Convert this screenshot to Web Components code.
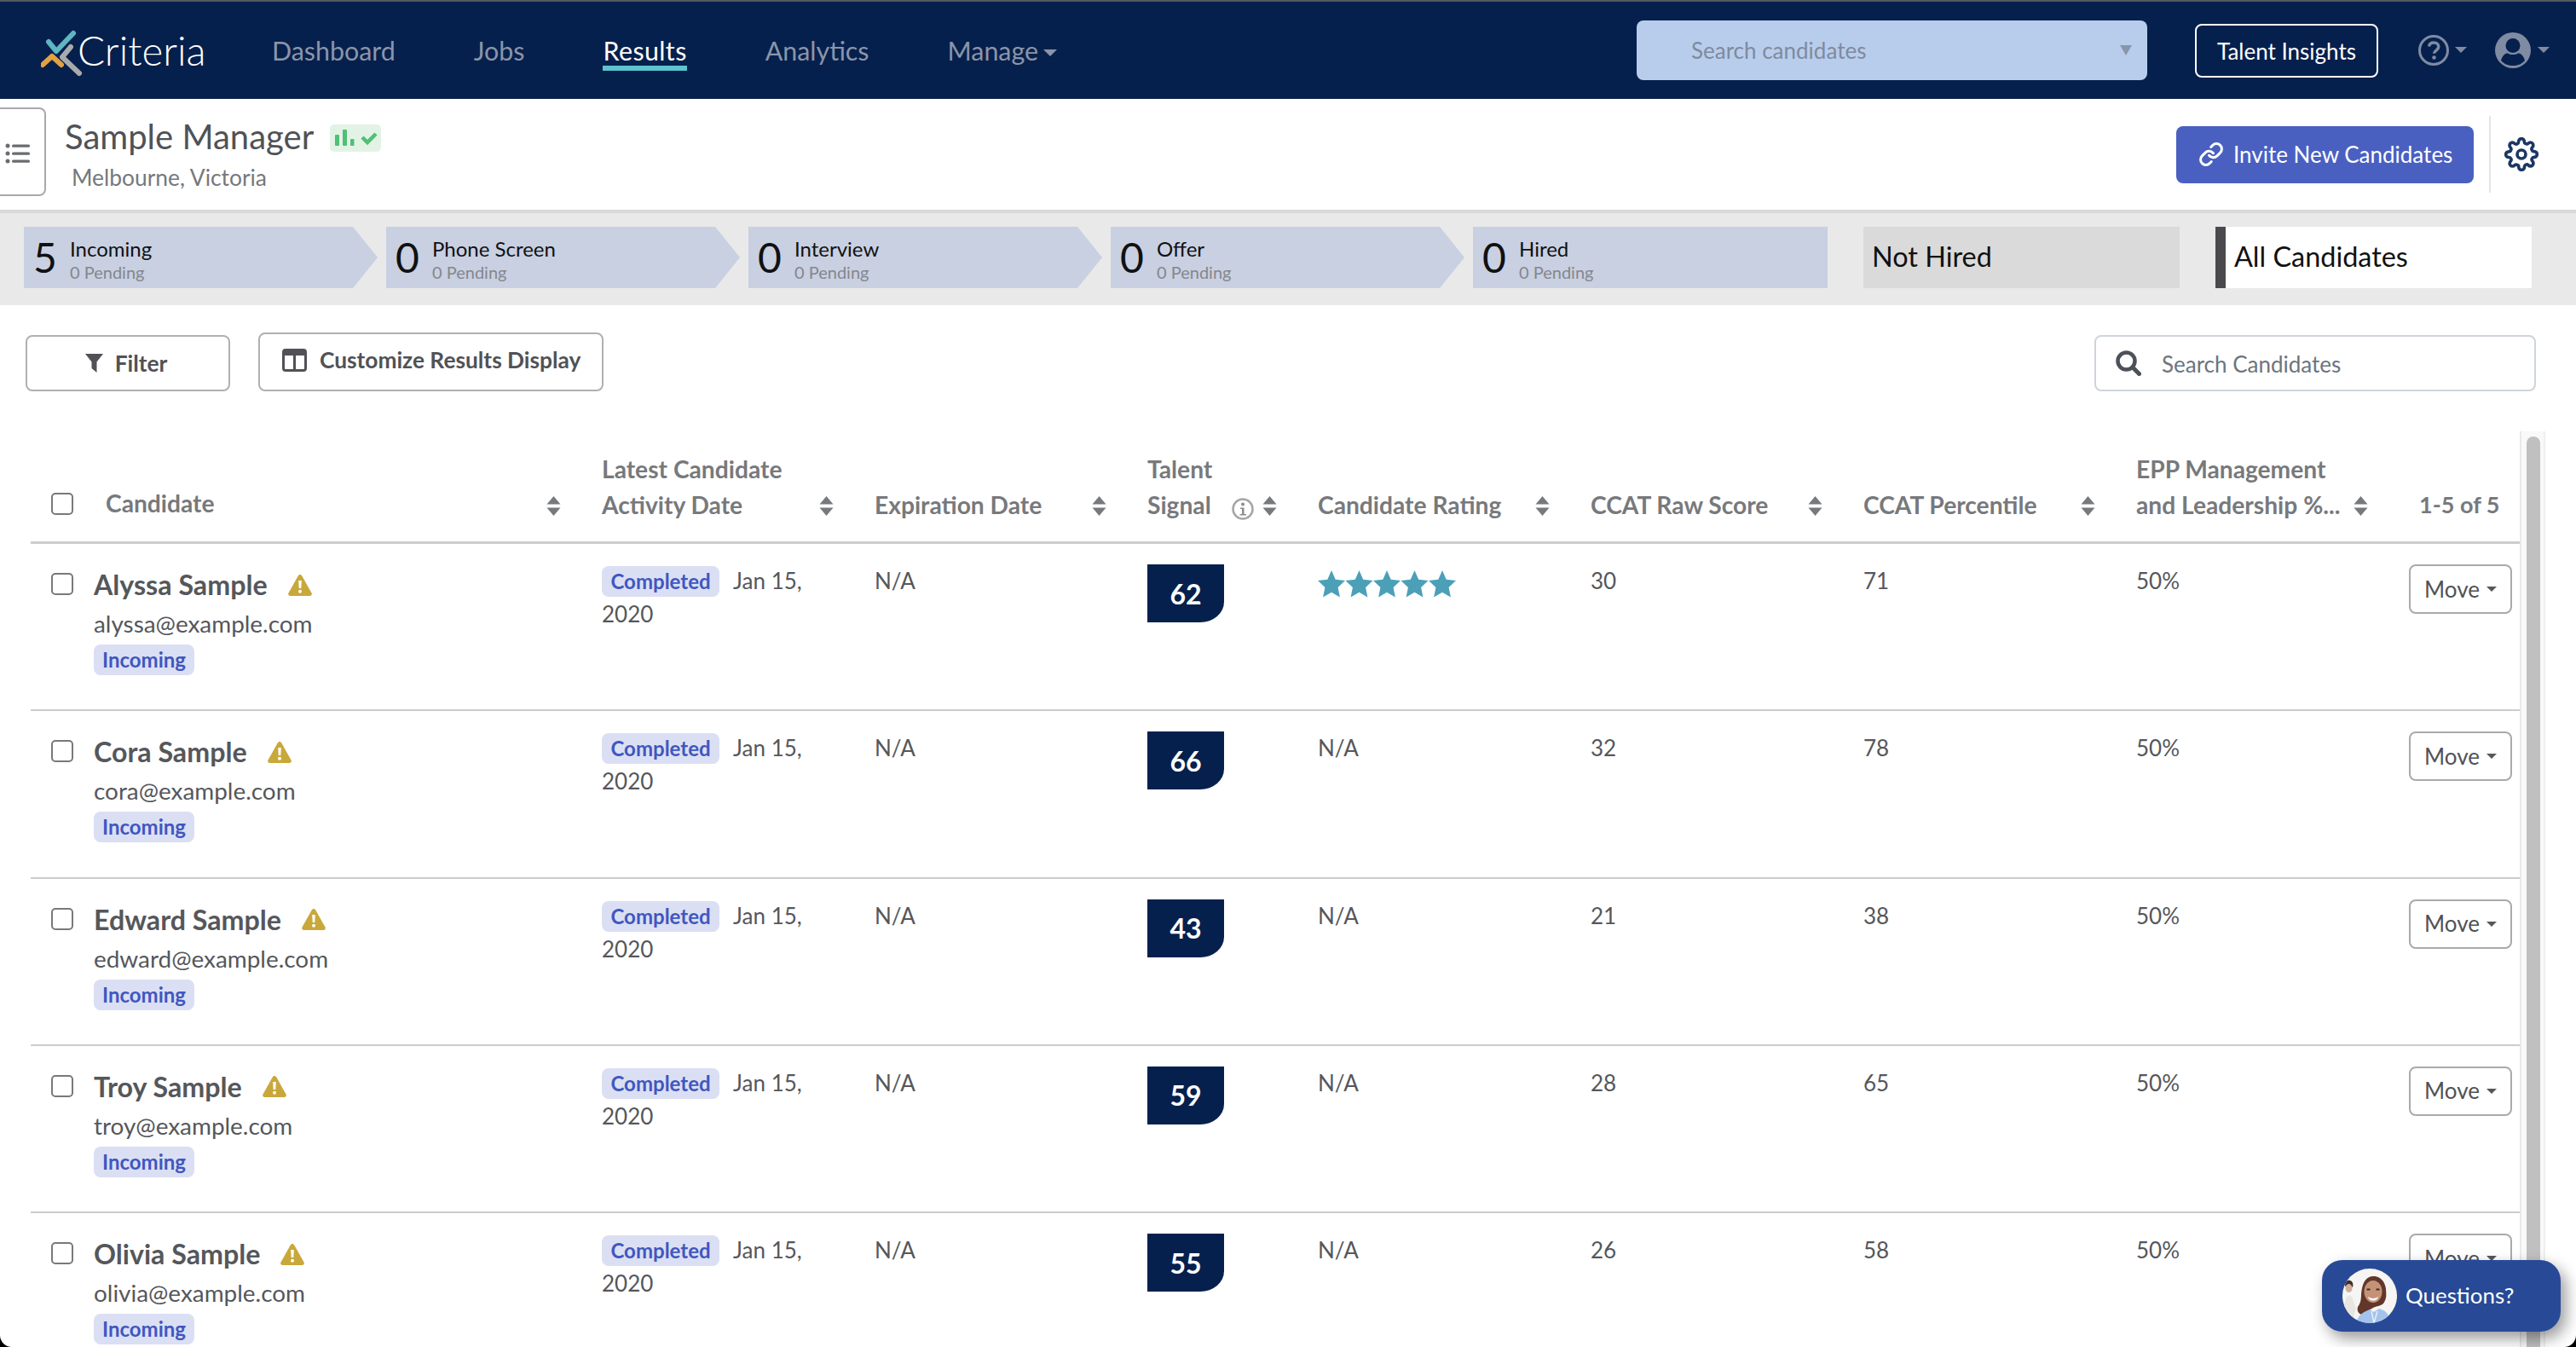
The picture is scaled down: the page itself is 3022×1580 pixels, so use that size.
<!DOCTYPE html>
<html lang="en"><head><meta charset="utf-8"><title>Criteria Results</title>
<style>
html,body{margin:0;padding:0;height:100%;overflow:hidden;background:#fff;font-family:Lato,"Liberation Sans",sans-serif;color:#55575b}
cr-app{height:1580px}
</style></head>
<body>
<cr-app>
  <cr-nav>
    <cr-link>Dashboard</cr-link><cr-link>Jobs</cr-link><cr-link active>Results</cr-link><cr-link>Analytics</cr-link><cr-link caret>Manage</cr-link>
  </cr-nav>
  <cr-subheader title-text="Sample Manager" sub="Melbourne, Victoria"></cr-subheader>
  <cr-pipeline>
    <cr-stage n="5" pending="0 Pending">Incoming</cr-stage>
    <cr-stage n="0" pending="0 Pending">Phone Screen</cr-stage>
    <cr-stage n="0" pending="0 Pending">Interview</cr-stage>
    <cr-stage n="0" pending="0 Pending">Offer</cr-stage>
    <cr-stage n="0" pending="0 Pending" last>Hired</cr-stage>
    <cr-bucket>Not Hired</cr-bucket>
    <cr-bucket selected>All Candidates</cr-bucket>
  </cr-pipeline>
  <cr-toolbar></cr-toolbar>
  <cr-table>
    <cr-row name="Alyssa Sample" email="alyssa@example.com" signal="62" rating="5" raw="30" pct="71"></cr-row>
    <cr-row name="Cora Sample" email="cora@example.com" signal="66" raw="32" pct="78"></cr-row>
    <cr-row name="Edward Sample" email="edward@example.com" signal="43" raw="21" pct="38"></cr-row>
    <cr-row name="Troy Sample" email="troy@example.com" signal="59" raw="28" pct="65"></cr-row>
    <cr-row name="Olivia Sample" email="olivia@example.com" signal="55" raw="26" pct="58"></cr-row>
  </cr-table>
  <cr-chat>Questions?</cr-chat>
  <cr-corners></cr-corners>
</cr-app>
<script>
const def=(tag,html,extra)=>{
  class C extends HTMLElement{
    constructor(){super();this.attachShadow({mode:'open'}).innerHTML=typeof html==='function'?html(this):html;}
    connectedCallback(){
      if(typeof html==='function'){this.shadowRoot.innerHTML=html(this);}
      if(extra)extra(this);
    }
  }
  customElements.define(tag,C);
};
const SORT=`<svg class="sort" width="17" height="23" viewBox="0 0 17 23"><path d="M8.5 0 16.5 9.5H.5zM8.5 23 .5 13.5h16z" fill="#77797c"/></svg>`;
const CHECKBOX=`<span style="display:block;box-sizing:border-box;width:26px;height:26px;border:2px solid #77797c;border-radius:5px;background:#fff;flex:none"></span>`;

def('cr-app',`<style>:host{display:block;position:relative;overflow:hidden}</style><slot></slot>`);

def('cr-nav',`<style>
:host{display:flex;align-items:center;box-sizing:border-box;height:116px;background:#06204d;border-top:2px solid #55585f;padding:0 31px 0 48px}
.logo{display:flex;align-items:center;width:192px;margin-right:79px;position:relative;height:70px}
.logo svg{position:absolute;left:0;top:0}
.logo span{margin-left:43px;font-size:47.5px;font-weight:300;color:#fff;line-height:70px;white-space:nowrap}
.links{display:flex;gap:92px;align-items:center}
.search{margin-left:auto;box-sizing:border-box;width:599px;height:70px;border-radius:8px;background:#b8cdec;display:flex;align-items:center;justify-content:space-between;padding:0 18px 0 64px;font-size:26px;color:#7f8a9e}
.tri{width:0;height:0;border:7px solid transparent;border-top:12px solid #8b95a8;border-bottom:0}
.ti{margin-left:56px;box-sizing:border-box;width:215px;height:63px;border:2px solid #fff;border-radius:8px;color:#fff;font-size:26px;display:flex;align-items:center;justify-content:center;margin-top:1px}
.ic{display:flex;align-items:center;gap:7px}
.ic i{display:block;width:0;height:0;border:7px solid transparent;border-top:7px solid #7f8ba3;border-bottom:0}
.help{margin-left:47px;margin-top:-1px}.user{margin-left:33px;gap:8px;margin-top:-1px}
</style>
<div class="logo"><svg width="70" height="70" viewBox="0 0 70 70" fill="none" stroke-linecap="round" stroke-linejoin="round" stroke-width="6">
<path d="M9 25 18 36 38 15" stroke="#5fb6c1"/><path d="M2 52 13 42 24 52" stroke="#e2a243"/><path d="M35 31 25 43 45 62" stroke="#a9abab"/></svg><span>Criteria</span></div>
<div class="links"><slot></slot></div>
<div class="search"><span>Search candidates</span><span class="tri"></span></div>
<div class="ti">Talent Insights</div>
<div class="ic help"><svg width="36" height="36" viewBox="0 0 36 36" fill="none"><circle cx="18" cy="18" r="16.5" stroke="#7f8ba3" stroke-width="3"/><path d="M12.5 13.5C13 10.5 15.5 9 18.2 9c3.2 0 5.6 2 5.6 4.8 0 4.2-5.3 4.2-5.3 8" stroke="#7f8ba3" stroke-width="3.4"/><circle cx="18.5" cy="26.5" r="2.3" fill="#7f8ba3"/></svg><i></i></div>
<div class="ic user"><svg width="42" height="42" viewBox="0 0 42 42"><circle cx="21" cy="21" r="21" fill="#7f8ba3"/><circle cx="21" cy="15.5" r="8.5" fill="#06204d"/><path d="M7 33c1.500-6 5-8.500 8-8.500 3 2 9 2 12 0 3 0 6.500 2.500 8 8.500-4 4.500-9 6-14 6s-10-1.500-14-6z" fill="#06204d"/></svg><i></i></div>`);

def('cr-link',el=>`<style>:host{display:block;position:relative;font-size:30.4px;line-height:40px;color:${el.hasAttribute('active')?'#fff':'#8b95a9'};white-space:nowrap;${el.hasAttribute('active')?'letter-spacing:.4px;':''}}
.u{position:absolute;left:0;right:0;top:38px;height:6px;background:#5cc3cf}
.c{display:inline-block;width:0;height:0;border:8px solid transparent;border-top:8px solid #8b95a9;border-bottom:0;margin-left:6px;vertical-align:5px}
</style><slot></slot>${el.hasAttribute('active')?'<div class="u"></div>':''}${el.hasAttribute('caret')?'<span class="c"></span>':''}`);

def('cr-subheader',el=>`<style>
:host{display:flex;align-items:center;box-sizing:border-box;height:134px;background:#fff;border-bottom:4px solid #d8d8d8}
.list{box-sizing:border-box;width:54px;height:104px;border:2px solid #a9a9a9;border-left:0;border-radius:0 8px 8px 0;display:flex;align-items:center;padding:4px 0 0 6px;margin-top:-6px}
.t{margin-left:22px;margin-top:-4px}
.h{display:flex;align-items:center;font-size:40px;line-height:52px;color:#505256;white-space:nowrap}
.b{margin-left:19px;width:60px;height:32px;background:#e2f3e6;border-radius:5px;display:block;margin-top:4px}
.s{margin:5px 0 0 8px;font-size:26.4px;line-height:34px;color:#76787b}
.invite{margin-left:auto;box-sizing:border-box;width:349px;height:67px;border-radius:8px;background:#4a60c1;color:#fff;font-size:26px;display:flex;align-items:center;padding-left:26px;gap:11px;white-space:nowrap}
.div{margin-left:18px;width:2px;height:90px;background:#e4e4e4}
.gear{margin:0 44px 0 16px;display:block}
</style>
<div class="list"><svg width="30" height="26" viewBox="0 0 30 26" fill="#6a6c70"><circle cx="3" cy="4" r="2.500"/><circle cx="3" cy="13" r="2.500"/><circle cx="3" cy="22" r="2.500"/><rect x="8" y="2.500" width="21" height="3.200" rx="1.500"/><rect x="8" y="11.500" width="21" height="3.200" rx="1.500"/><rect x="8" y="20.500" width="21" height="3.200" rx="1.500"/></svg></div>
<div class="t"><div class="h"><span>${el.getAttribute('title-text')||''}</span>
<svg class="b" viewBox="0 0 60 32"><rect width="60" height="32" rx="5" fill="#e2f3e6"/><g fill="#4fc074"><rect x="6" y="12" width="5" height="13" rx="1"/><rect x="15" y="6" width="5" height="19" rx="1"/><rect x="24" y="17" width="4.500" height="8" rx="1"/></g><path d="M38 15 44 21 54 11" fill="none" stroke="#4fc074" stroke-width="4.500"/></svg></div>
<div class="s">${el.getAttribute('sub')||''}</div></div>
<div class="invite"><svg width="30" height="30" viewBox="0 0 24 24" fill="none" stroke="#fff" stroke-width="2.400" stroke-linecap="round" stroke-linejoin="round"><path d="M10 13a5 5 0 0 0 7.540.54l3-3a5 5 0 0 0-7.070-7.070l-1.720 1.710"/><path d="M14 11a5 5 0 0 0-7.540-.54l-3 3a5 5 0 0 0 7.070 7.070l1.710-1.710"/></svg><span>Invite New Candidates</span></div>
<div class="div"></div>
<svg class="gear" width="40" height="40" viewBox="0 0 24 24" fill="none" stroke="#1c3763" stroke-width="2.200" stroke-linecap="round" stroke-linejoin="round"><circle cx="12" cy="12" r="3"/><path d="M19.400 15a1.650 1.650 0 0 0 .33 1.820l.06.06a2 2 0 0 1 0 2.830 2 2 0 0 1-2.830 0l-.06-.06a1.650 1.650 0 0 0-1.820-.33 1.650 1.650 0 0 0-1 1.510V21a2 2 0 0 1-2 2 2 2 0 0 1-2-2v-.09A1.650 1.650 0 0 0 9 19.400a1.650 1.650 0 0 0-1.820.33l-.06.06a2 2 0 0 1-2.830 0 2 2 0 0 1 0-2.830l.06-.06a1.650 1.650 0 0 0 .33-1.820 1.650 1.650 0 0 0-1.510-1H3a2 2 0 0 1-2-2 2 2 0 0 1 2-2h.09A1.650 1.650 0 0 0 4.600 9a1.650 1.650 0 0 0-.33-1.820l-.06-.06a2 2 0 0 1 0-2.830 2 2 0 0 1 2.830 0l.06.06a1.650 1.650 0 0 0 1.820.33H9a1.650 1.650 0 0 0 1-1.510V3a2 2 0 0 1 2-2 2 2 0 0 1 2 2v.09a1.650 1.650 0 0 0 1 1.510 1.650 1.650 0 0 0 1.820-.33l.06-.06a2 2 0 0 1 2.830 0 2 2 0 0 1 0 2.830l-.06.06a1.650 1.650 0 0 0-.33 1.820V9a1.650 1.650 0 0 0 1.510 1H21a2 2 0 0 1 2 2 2 2 0 0 1-2 2h-.09a1.650 1.650 0 0 0-1.510 1z"/></svg>`);

def('cr-pipeline',`<style>:host{display:flex;box-sizing:border-box;height:108px;background:#e9e9e9;padding:16px 52px 20px 28px;gap:10px}</style><slot></slot>`);

def('cr-stage',el=>`<style>
:host{display:flex;flex:none;box-sizing:border-box;width:${el.hasAttribute('last')?416:415}px;height:72px;background:#c8d0e2;color:#111;align-items:center;padding-left:11px;${el.hasAttribute('last')?'':'clip-path:polygon(0 0,calc(100% - 29px) 0,100% 50%,calc(100% - 29px) 100%,0 100%);'}}
.n{width:43px;font-size:48px;line-height:72px;flex:none}
.w{margin-top:8px}
.l{font-size:24px;line-height:26px;margin-top:-2px}
.p{font-size:20px;line-height:24px;color:#85878c;margin-top:2px}
</style><div class="n">${el.getAttribute('n')}</div><div class="w"><div class="l"><slot></slot></div><div class="p">${el.getAttribute('pending')}</div></div>`);

def('cr-bucket',el=>{const s=el.hasAttribute('selected');return `<style>
:host{display:flex;flex:none;box-sizing:border-box;width:371px;height:72px;margin-left:32px;align-items:center;font-size:32.4px;color:#111;white-space:nowrap;background:${s?'#fff':'#dadada'};padding:0 0 3px 10px;${s?'border-left:12px solid #4a4a4e;':''}}
</style><slot></slot>`});

def('cr-toolbar',`<style>
:host{display:flex;box-sizing:border-box;height:148px;padding:32px 47px 0 30px;align-items:flex-start}
.b{box-sizing:border-box;border:2px solid #b0b0b0;border-radius:8px;display:flex;align-items:center;font-size:26.3px;font-weight:700;color:#505256;white-space:nowrap}
.f{width:240px;height:66px;margin-top:3px;justify-content:center;gap:14px;padding-right:4px}
.c{width:405px;height:69px;margin-left:33px;padding-left:26px;gap:15px;padding-bottom:5px}
.s{margin-left:auto;margin-top:3px;box-sizing:border-box;width:518px;height:66px;border:2px solid #ced4da;border-radius:8px;display:flex;align-items:center;padding-left:23px;gap:24px;font-size:26px;color:#6c757d}
.s span{padding-top:2px}
</style>
<div class="b f"><svg width="21" height="22" viewBox="0 0 21 22" fill="#505256"><path d="M0 0H21L13.500 9.500V22L7.500 17V9.500z"/></svg><span>Filter</span></div>
<div class="b c"><svg width="29" height="27" viewBox="0 0 29 27"><rect x="1.500" y="1.500" width="26" height="24" rx="2.500" fill="none" stroke="#505256" stroke-width="3"/><rect x="1" y="1" width="27" height="7" rx="2" fill="#505256"/><rect x="13" y="6" width="3" height="19" fill="#505256"/></svg><span>Customize Results Display</span></div>
<div class="s"><svg width="30" height="30" viewBox="0 0 30 30" fill="none" stroke="#4d5158"><circle cx="12.500" cy="12.500" r="10" stroke-width="4.500"/><path d="M20 20 27.500 27.500" stroke-width="5" stroke-linecap="round"/></svg><span>Search Candidates</span></div>`);

const GRID='grid-template-columns:654px 320px 320px 200px 320px 320px 320px 320px 146px';
def('cr-table',`<style>
:host{display:flex;margin-left:36px;height:1074px}
.main{width:2920px;flex:none}
.head{display:grid;${GRID};height:132px;box-sizing:border-box;border-bottom:3px solid #ccc;font-size:28.2px;font-weight:700;color:#77797c;line-height:42px;align-items:end}
.h{display:flex;align-items:flex-end;padding:0 32px 22px 16px;white-space:nowrap}
.h .sort{margin:0 0 8px auto;flex:none}
.h .i{margin:0 10px 3px auto;flex:none}
.h .i + .sort{margin-left:0}
.first{padding-left:24px;gap:38px}
.first>span:first-child{margin-bottom:9px}
.first>span:nth-child(2){margin-bottom:2px}
.last{padding:0 0 22px 28px;font-size:27px}
.sb{width:30px;flex:none;box-sizing:border-box;background:#f9f9f9;border-left:2px solid #e9e9e9;border-right:2px solid #efefef;padding:6px 0 0 6px}
.th{width:16px;height:100%;background:#c0c0c0;border-radius:8px 8px 0 0}
</style>
<div class="main"><div class="head">
<div class="h first">${CHECKBOX}<span>Candidate</span>${SORT}</div>
<div class="h"><span>Latest Candidate<br>Activity Date</span>${SORT}</div>
<div class="h"><span>Expiration Date</span>${SORT}</div>
<div class="h"><span>Talent<br>Signal</span><svg class="i" width="26" height="26" viewBox="0 0 26 26"><circle cx="13" cy="13" r="11.500" fill="none" stroke="#a5a5a5" stroke-width="2.500"/><circle cx="13" cy="7.500" r="2" fill="#8b8b8b"/><path d="M10 11.500h4.500V19H17v1.500H9.500V19H12v-6h-2z" fill="#8b8b8b"/></svg>${SORT}</div>
<div class="h"><span>Candidate Rating</span>${SORT}</div>
<div class="h"><span>CCAT Raw Score</span>${SORT}</div>
<div class="h"><span>CCAT Percentile</span>${SORT}</div>
<div class="h"><span>EPP Management<br>and Leadership %...</span>${SORT}</div>
<div class="h last"><span>1-5 of 5</span></div>
</div><slot></slot></div>
<div class="sb"><div class="th"></div></div>`);

const STAR='M16 0 20.700 10.800 32 12.100 23.600 20 25.900 31.500 16 25.700 6.100 31.500 8.400 20 0 12.100 11.300 10.800Z';
def('cr-row',el=>{
  const a=k=>el.getAttribute(k)||'';
  const stars=a('rating')?`<svg width="162" height="32" viewBox="0 0 162 32" style="display:block;margin-top:7px" fill="#4ba0b8">${[0,1,2,3,4].map(i=>`<path transform="translate(${i*32.500} 0)" d="${STAR}"/>`).join('')}</svg>`:'N/A';
  return `<style>
:host{display:grid;${GRID};height:196.250px;box-sizing:border-box;border-bottom:2px solid #ccc;font-size:26px;line-height:39px;color:#55575b}
.c{padding:24px 16px 0}
.first{padding:0 0 0 24px;display:flex;gap:24px}
.first>span:first-child{margin-top:34px}
.name{font-size:32.2px;font-weight:700;line-height:40px;margin-top:28px;display:flex;align-items:center;gap:24px;white-space:nowrap}
.email{font-size:27.9px;line-height:40px;margin-top:5px}
.badge{display:inline-block;box-sizing:border-box;height:36px;line-height:35px;border-radius:8px;background:#dbdff3;color:#3f57c0;font-size:24px;font-weight:700;padding:0 10px;vertical-align:top}
.in{margin-top:5px;display:block;width:max-content}
.date .badge{margin:2px 16px 0 0;padding:0 10.500px}
.sig{width:90px;height:68px;background:#06204d;border-radius:0 0 28px 0/0 0 24px 0;color:#fff;font-size:32px;font-weight:700;display:flex;align-items:center;justify-content:center}
.m{padding:24px 0 0 16px}
.mv{box-sizing:border-box;width:121px;height:58px;border:2px solid #aaa;border-radius:8px;background:#fff;display:flex;align-items:center;justify-content:center;gap:8px;font-size:26px;color:#505256}
.mv i{display:block;width:0;height:0;border:6px solid transparent;border-top:6px solid #55575b;border-bottom:0}
</style>
<div class="first">${CHECKBOX}<div><div class="name"><span>${a('name')}</span><svg width="28" height="25" viewBox="0 0 28 25"><path d="M14 0c1 0 1.800.6 2.300 1.500L27.500 21.500c.9 1.600-.2 3.500-2 3.500H2.500c-1.800 0-2.900-1.900-2-3.500L11.700 1.500C12.200.6 13 0 14 0z" fill="#c9a83b"/><path d="M12.200 7h3.600l-.5 9h-2.600z" fill="#fff"/><circle cx="14" cy="19.800" r="2" fill="#fff"/></svg></div>
<div class="email">${a('email')}</div><span class="badge in">Incoming</span></div></div>
<div class="c date"><span class="badge">Completed</span><span>Jan 15,</span><br><span>2020</span></div>
<div class="c">N/A</div>
<div class="c"><div class="sig">${a('signal')}</div></div>
<div class="c">${stars}</div>
<div class="c">${a('raw')}</div>
<div class="c">${a('pct')}</div>
<div class="c">50%</div>
<div class="m"><div class="mv"><span>Move</span><i></i></div></div>`});

def('cr-chat',`<style>
:host{position:absolute;right:18px;bottom:18px;box-sizing:border-box;width:280px;height:84px;background:#284a96;border-radius:24px;box-shadow:6px 8px 18px rgba(0,0,0,.4);display:flex;align-items:center;padding:0 0 2px 24px;gap:10px;color:#fff;font-size:25.9px}
svg{margin-top:2px}
</style>
<svg width="64" height="64" viewBox="0 0 64 64"><defs><clipPath id="c"><circle cx="32" cy="32" r="32"/></clipPath></defs><g clip-path="url(#c)"><rect width="64" height="64" fill="#f6f5f3"/>
<path d="M2 46C3 34 6 30 10 32c3 3 3 10 6 14l-4 14L2 56z" fill="#e9e5e0"/><path d="M3 20c0-5 3-7 6-6 3 1 4 4 3 8l-4-2-2 4z" fill="#3d2f2c"/><ellipse cx="7.500" cy="23" rx="4" ry="5" fill="#d0ad9c"/>
<path d="M35 9c9-1 15 6 16 15 .5 7 1 11-3 17-3 3-8 3-12 5l-14 8c-4-2-5-5-4-9 3-4 4-8 4-15 1-11 4-20 13-21z" fill="#63362a"/>
<ellipse cx="36" cy="27" rx="10.500" ry="13" fill="#c49377"/><path d="M30 33c3 2.500 9 2.500 12 0-1 3.500-3 4.500-6 4.500s-5-1-6-4.500z" fill="#fff"/><path d="M28.500 24.500h4M39.500 24.500h4" stroke="#3c2a22" stroke-width="1.800"/>
<path d="M16 64c2-9 8-13 16-16l5 3 6-4c7 2 12 6 15 17z" fill="#a3c3ec"/><path d="M34 50 37 64M41 50 37 64" stroke="#e9eef6" stroke-width="1.500"/></g></svg><slot></slot>`);

def('cr-corners',`<style>:host{position:absolute;inset:0;border-radius:0 0 14px 14px;box-shadow:0 0 0 30px #000;pointer-events:none}</style>`);
</script>
</body></html>
